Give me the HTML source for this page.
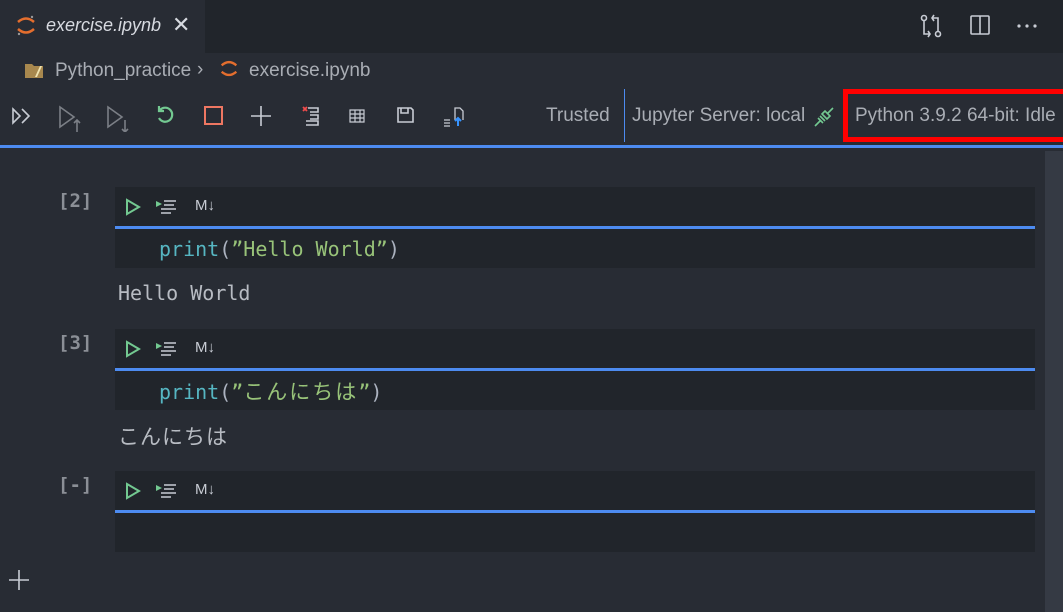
<!DOCTYPE html>
<html><head><meta charset="utf-8"><style>
body{margin:0;width:1063px;height:612px;background:#282c34;overflow:hidden;position:relative;font-family:"Liberation Sans","Noto Sans CJK JP",sans-serif;color:#abb2bf}
.abs{position:absolute}
.mono{font-family:"DejaVu Sans Mono","Liberation Mono","Noto Sans CJK JP",monospace}
.cell{position:absolute;left:115px;width:920px;background:#21252b}
.ctb{height:39px;position:relative}
.bl{height:3px;background:#4d8bf0}
.code{height:39px;position:relative;font-size:20px}
.num{position:absolute;left:58px;font-size:19px;font-weight:bold;color:#8b8f96;font-family:"DejaVu Sans Mono",monospace}
.out{position:absolute;left:118px;font-size:20px;color:#b8bcc3}
.jp{font-family:"Noto Sans CJK JP",sans-serif;font-size:21px;letter-spacing:2px}
</style></head><body>
<div class="abs" style="left:0;top:0;width:1063px;height:53px;background:#21252b"></div>
<div class="abs" style="left:0;top:0;width:205px;height:53px;background:#282c34"></div>
<svg class="abs" style="left:14px;top:14px" width="24" height="24" viewBox="0 0 24 24"><path d="M4 8 Q12 1 20 8" stroke="#e46e2e" stroke-width="2.5" fill="none"/><path d="M4 15 Q12 22 20 15" stroke="#e46e2e" stroke-width="2.5" fill="none"/><circle cx="18" cy="3" r="1.2" fill="#999"/><circle cx="5" cy="20" r="1.2" fill="#999"/></svg>
<div class="abs" style="left:46px;top:15px;font-size:18px;font-style:italic;color:#d7dae0">exercise.ipynb</div>
<div class="abs" style="left:172px;top:12px;font-size:22px;color:#d7dae0">✕</div>
<svg class="abs" style="left:918px;top:13px" width="26" height="26" viewBox="0 0 26 26" fill="none" stroke="#c8ccd4" stroke-width="1.6"><circle cx="6" cy="5" r="2.5"/><circle cx="20" cy="21" r="2.5"/><path d="M6 8v13h6M20 18V5h-6M10 18l2 3-2 3M16 2l-2 3 2 3"/></svg>
<svg class="abs" style="left:969px;top:14px" width="22" height="22" viewBox="0 0 22 22" fill="none" stroke="#c8ccd4" stroke-width="1.6"><rect x="2" y="2" width="18" height="18" rx="1"/><path d="M11 2v18"/></svg>
<svg class="abs" style="left:1015px;top:22px" width="24" height="8"><circle cx="4" cy="4" r="1.6" fill="#c8ccd4"/><circle cx="12" cy="4" r="1.6" fill="#c8ccd4"/><circle cx="20" cy="4" r="1.6" fill="#c8ccd4"/></svg>
<svg class="abs" style="left:25px;top:61px" width="20" height="18" viewBox="0 0 20 18"><path d="M0 3h7l2 2h9v12H0z" fill="#a8884e"/><path d="M10 16l5-11h2l-5 11z" fill="#f0e3b0"/></svg>
<div class="abs" style="left:55px;top:60px;font-size:19px;color:#a9adb4">Python_practice</div>
<div class="abs" style="left:197px;top:59px;font-size:19px;color:#a9adb4">›</div>
<svg class="abs" style="left:218px;top:58px" width="22" height="22" viewBox="0 0 24 24"><path d="M4 8 Q12 1 20 8" stroke="#e46e2e" stroke-width="2.5" fill="none"/><path d="M4 15 Q12 22 20 15" stroke="#e46e2e" stroke-width="2.5" fill="none"/></svg>
<div class="abs" style="left:249px;top:60px;font-size:19px;color:#a9adb4">exercise.ipynb</div>
<svg class="abs" style="left:0;top:100px" width="480" height="32" viewBox="0 0 480 32" fill="none" stroke-width="1.6">
<path d="M13 9l7 7-7 7zM22 9l7 7-7 7" stroke="#c8ccd4"/>
<path d="M60 7l14 10-14 10z M77 32v-12M74 23l3-3 3 3" stroke="#7b7f86"/>
<path d="M108 7l14 10-14 10z M125 20v12M122 29l3 3 3-3" stroke="#7b7f86"/>
<path d="M160 10a7 7 0 1 1-1 8M159 6v5h5" stroke="#73c991" stroke-width="2.2"/>
<rect x="205" y="7" width="17" height="17" stroke="#ee7762" stroke-width="2"/>
<path d="M261 6v20M251 16h20" stroke="#c8ccd4"/>
<path d="M303 7l4 4M307 7l-4 4" stroke="#f14c4c" stroke-width="1.8"/><path d="M308 8h10v4h-8M310 15h8v4h-8M306 21h12v4h-12" stroke="#c8ccd4"/>
<path d="M350 10h14v12h-14zM350 14h14M350 18h14M355 10v12M360 10v12" stroke="#c8ccd4" stroke-width="1.2"/>
<path d="M398 8h13l2 2v12h-15zM401 8v5h7V8" stroke="#c8ccd4"/>
<path d="M444 20h6M444 23h6M444 26h6M455 20V8h5l3 3v9" stroke="#c8ccd4" stroke-width="1.3"/><path d="M458 26v-8M455 21l3-3 3 3" stroke="#3794ff" stroke-width="2"/>
</svg>
<div class="abs" style="left:546px;top:105px;font-size:19px;color:#a9adb4">Trusted</div>
<div class="abs" style="left:624px;top:89px;width:1px;height:53px;background:#4d8bf0"></div>
<div class="abs" style="left:632px;top:105px;font-size:19px;color:#a9adb4">Jupyter Server: local</div>
<svg class="abs" style="left:813px;top:106px" width="22" height="22" viewBox="0 0 22 22" fill="none" stroke="#73c991" stroke-width="1.6"><path d="M2 20l5-5M20 2l-5 5M7 10l5 5M9 8l3-3 5 5-3 3zM5 12l5 5"/></svg>
<div class="abs" style="left:843px;top:89px;height:43px;border:5px solid #f00;border-right:none;box-sizing:content-box;width:215px"></div>
<div class="abs" style="left:855px;top:105px;font-size:19px;color:#a9adb4;white-space:nowrap">Python 3.9.2 64-bit: Idle</div>
<div class="abs" style="left:0;top:145px;width:1063px;height:3px;background:#4d8bf0"></div>
<div class="abs" style="left:1045px;top:151px;width:18px;height:461px;background:#353a44"></div>

<div class="num" style="top:190px">[2]</div>
<div class="cell" style="top:187px"><div class="ctb"><svg class="abs" style="left:10px;top:11px" width="80" height="18" viewBox="0 0 80 18" fill="none"><path d="M2 2l12 7-12 7z" stroke="#73c991" stroke-width="2"/><path d="M31 3l6 3-6 3z" fill="#73c991"/><path d="M39 3h12M39 7h10M36 11h15M36 15h10" stroke="#c8ccd4" stroke-width="1.5"/></svg><span class="abs" style="left:80px;top:10px;font-size:15px;color:#c8ccd4">M↓</span></div><div class="bl"></div><div class="code"><span class="abs mono" style="left:44px;top:8px"><span style="color:#56b6c2">print</span>(<span style="color:#98c379">”Hello World”</span>)</span></div></div>
<div class="out mono" style="top:281px">Hello World</div>

<div class="num" style="top:332px">[3]</div>
<div class="cell" style="top:329px"><div class="ctb"><svg class="abs" style="left:10px;top:11px" width="80" height="18" viewBox="0 0 80 18" fill="none"><path d="M2 2l12 7-12 7z" stroke="#73c991" stroke-width="2"/><path d="M31 3l6 3-6 3z" fill="#73c991"/><path d="M39 3h12M39 7h10M36 11h15M36 15h10" stroke="#c8ccd4" stroke-width="1.5"/></svg><span class="abs" style="left:80px;top:10px;font-size:15px;color:#c8ccd4">M↓</span></div><div class="bl"></div><div class="code"><span class="abs mono" style="left:44px;top:5px;white-space:nowrap"><span style="color:#56b6c2">print</span>(<span style="color:#98c379">”<span class="jp">こんにちは</span>”</span>)</span></div></div>
<div class="out" style="top:421px;font-family:'Noto Sans CJK JP',sans-serif;font-size:21px;letter-spacing:1px">こんにちは</div>

<div class="num" style="top:474px">[-]</div>
<div class="cell" style="top:471px"><div class="ctb"><svg class="abs" style="left:10px;top:11px" width="80" height="18" viewBox="0 0 80 18" fill="none"><path d="M2 2l12 7-12 7z" stroke="#73c991" stroke-width="2"/><path d="M31 3l6 3-6 3z" fill="#73c991"/><path d="M39 3h12M39 7h10M36 11h15M36 15h10" stroke="#c8ccd4" stroke-width="1.5"/></svg><span class="abs" style="left:80px;top:10px;font-size:15px;color:#c8ccd4">M↓</span></div><div class="bl"></div><div class="code"></div></div>

<svg class="abs" style="left:8px;top:569px" width="22" height="22" viewBox="0 0 22 22"><path d="M11 1v20M1 11h20" stroke="#c8ccd4" stroke-width="1.6"/></svg>
</body></html>
